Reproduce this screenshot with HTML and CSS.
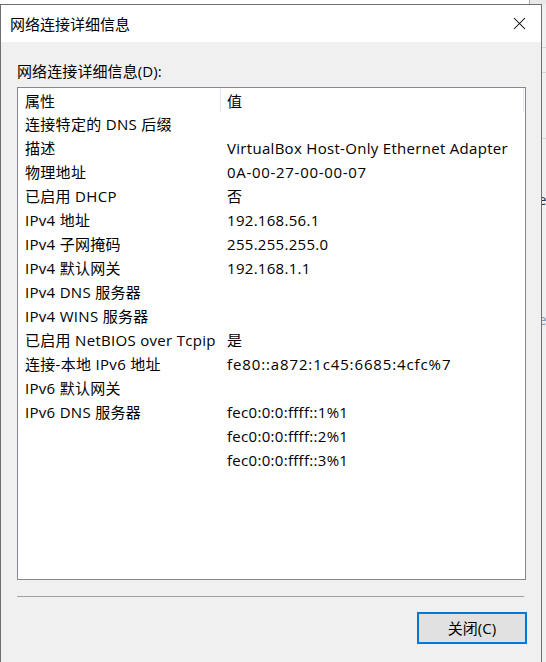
FILE: index.html
```html
<!DOCTYPE html>
<html lang="zh-CN">
<head>
<meta charset="utf-8">
<title>网络连接详细信息</title>
<link rel="stylesheet" href="styles.css">
</head>
<body>
<div class="desktop">
  <div class="topstrip">
    <div class="top-white"></div>
    <div class="top-gray"></div>
  </div>
  <div class="stage">
    <div class="dialog">
      <div class="titlebar">
        <span class="title">网络连接详细信息</span>
        <svg class="close" width="13" height="13" viewBox="0 0 13 13" aria-hidden="true">
          <path d="M1 1 L12 12 M12 1 L1 12" stroke="#000" stroke-width="1.05" fill="none"/>
        </svg>
      </div>
      <div class="content">
        <div class="label">网络连接详细信息(D):</div>
        <div class="listview">
          <div class="header">
            <div class="hcell col1">属性</div>
            <div class="hcell col2">值</div>
          </div>
          <div class="rows">
            <div class="cell c1">连接特定的 DNS 后缀</div><div class="cell c2"></div>
            <div class="cell c1">描述</div><div class="cell c2">VirtualBox Host-Only Ethernet Adapter</div>
            <div class="cell c1">物理地址</div><div class="cell c2 wide">0A-00-27-00-00-07</div>
            <div class="cell c1">已启用 DHCP</div><div class="cell c2">否</div>
            <div class="cell c1">IPv4 地址</div><div class="cell c2">192.168.56.1</div>
            <div class="cell c1">IPv4 子网掩码</div><div class="cell c2">255.255.255.0</div>
            <div class="cell c1">IPv4 默认网关</div><div class="cell c2">192.168.1.1</div>
            <div class="cell c1">IPv4 DNS 服务器</div><div class="cell c2"></div>
            <div class="cell c1">IPv4 WINS 服务器</div><div class="cell c2"></div>
            <div class="cell c1">已启用 NetBIOS over Tcpip</div><div class="cell c2">是</div>
            <div class="cell c1">连接-本地 IPv6 地址</div><div class="cell c2 wider">fe80::a872:1c45:6685:4cfc%7</div>
            <div class="cell c1">IPv6 默认网关</div><div class="cell c2"></div>
            <div class="cell c1">IPv6 DNS 服务器</div><div class="cell c2">fec0:0:0:ffff::1%1</div>
            <div class="cell c1"></div><div class="cell c2">fec0:0:0:ffff::2%1</div>
            <div class="cell c1"></div><div class="cell c2">fec0:0:0:ffff::3%1</div>
          </div>
        </div>
        <div class="separator"></div>
        <div class="buttons">
          <button class="btn default" type="button">关闭(C)</button>
        </div>
      </div>
    </div>
    <div class="bgwin">
      <div class="bg-line l1"></div>
      <div class="bg-line l2"></div>
      <div class="bg-line l3"></div>
      <div class="bg-text t1">e</div>
      <div class="bg-text t2">e</div>
    </div>
  </div>
</div>
</body>
</html>
```

FILE: styles.css
```css
* { box-sizing: border-box; }

html, body {
  margin: 0;
  padding: 0;
}

body {
  font-family: "Open Sans", "Noto Sans CJK SC", sans-serif;
  font-size: 15px;
  color: #000;
  background: #f0f0f0;
}

.desktop {
  width: 546px;
  height: 662px;
  overflow: hidden;
  display: flex;
  flex-direction: column;
  background: #f0f0f0;
}

.topstrip {
  height: 4px;
  display: flex;
  flex-shrink: 0;
}

.top-white {
  width: 529px;
  background: #ffffff;
}

.top-gray {
  flex: 1;
  background: #e9e9e9;
  border-left: 1px solid #a9a9a9;
}

.stage {
  flex: 1;
  display: flex;
  min-height: 0;
}

.dialog {
  width: 542px;
  flex-shrink: 0;
  border: 1px solid #6f6f6f;
  border-bottom: none;
  background: #f0f0f0;
  display: flex;
  flex-direction: column;
}

.titlebar {
  height: 37px;
  background: #ffffff;
  display: flex;
  align-items: center;
  justify-content: space-between;
  padding: 0 15px 0 9px;
  flex-shrink: 0;
}

.title {
  font-size: 15px;
  line-height: 20px;
}

.close {
  display: block;
}

.content {
  padding: 19px 15px 0 16px;
  display: flex;
  flex-direction: column;
}

.label {
  line-height: 20px;
  height: 20px;
  margin-bottom: 6px;
  letter-spacing: 0.1px;
}

.listview {
  width: 509px;
  height: 493px;
  border: 1px solid #828790;
  background: #ffffff;
}

.header {
  display: flex;
  height: 24px;
}

.hcell {
  line-height: 24px;
  height: 24px;
  padding-top: 1px;
  border-right: 1px solid #e5e5e5;
  white-space: nowrap;
}

.hcell.col1 {
  width: 203px;
  padding-left: 7px;
}

.hcell.col2 {
  width: 303px;
  padding-left: 6px;
}

.rows {
  display: grid;
  grid-template-columns: 203px 1fr;
  grid-auto-rows: 24px;
}

.cell {
  line-height: 23px;
  padding-top: 1px;
  white-space: nowrap;
  overflow: hidden;
}

.cell.c1 {
  padding-left: 7px;
  letter-spacing: 0.3px;
}

.cell.c2 {
  padding-left: 6px;
  letter-spacing: 0.3px;
}

.cell.c2.wide {
  letter-spacing: 0.7px;
}

.cell.c2.wider {
  letter-spacing: 0.88px;
}

.separator {
  width: 507px;
  height: 1px;
  background: #a0a0a0;
  margin-top: 16px;
}

.buttons {
  display: flex;
  justify-content: flex-end;
  width: 510px;
  margin-top: 15px;
}

.btn {
  width: 110px;
  height: 32px;
  font-family: "Open Sans", "Noto Sans CJK SC", sans-serif;
  font-size: 15px;
  color: #000;
  background: #e1e1e1;
  border: 2px solid #0078d7;
  padding: 0;
  margin: 0;
  line-height: 26px;
}

.bgwin {
  flex: 1;
  background: #f0f0f0;
  display: flex;
  flex-direction: column;
  overflow: hidden;
}

.bg-line {
  height: 1px;
  background: #d4d4d4;
  flex-shrink: 0;
}

.l1 { margin-top: 43px; }
.l2 { margin-top: 24px; }
.l3 { margin-top: 65px; }

.bg-text {
  font-size: 15px;
  line-height: 20px;
  color: #333;
  margin-left: -4px;
}

.t1 { margin-top: 50px; }
.t2 { margin-top: 100px; color: #8a93a8; }
```
